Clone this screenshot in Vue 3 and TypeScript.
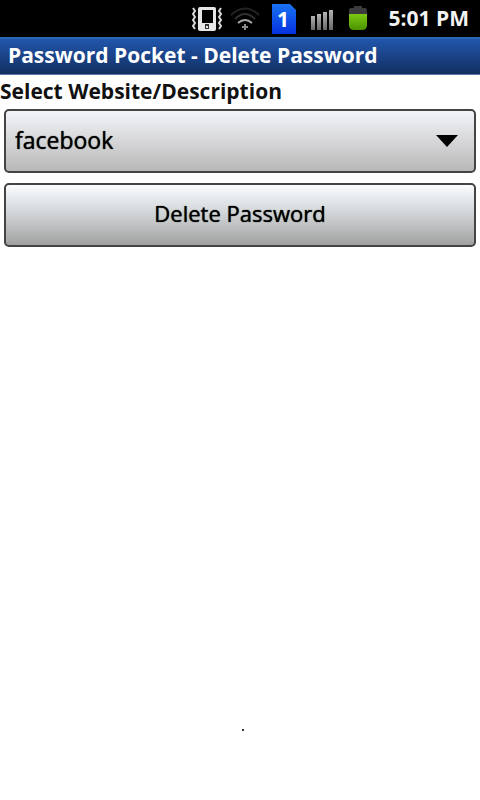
<script setup lang="ts">
import { ref } from 'vue'

const websites = ref<string[]>(['facebook'])
const selected = ref<string>('facebook')

function deletePassword(): void {
  websites.value = websites.value.filter((name) => name !== selected.value)
  selected.value = websites.value[0] ?? ''
}
</script>

<template>
  <div class="screen">
    <div class="status">
      <svg class="vibrate" width="32" height="26" viewBox="0 0 32 26" aria-hidden="true">
        <rect x="7" y="1" width="18" height="24" rx="2" fill="#e6e6e6" />
        <rect x="11" y="4" width="11" height="13" fill="#000" />
        <path d="M14 18h4v5h-4z" fill="#333" />
        <path d="M15 20h2v2h-2z" fill="#e6e6e6" />
        <path
          d="M2 2l2 3-2 3 2 3-2 3 2 3-2 3 2 3M30 2l-2 3 2 3-2 3 2 3-2 3 2 3-2 3"
          fill="none"
          stroke="#d8d8d8"
          stroke-width="2"
        />
      </svg>
      <svg class="wifi" width="30" height="24" viewBox="0 0 30 24" aria-hidden="true">
        <g fill="none" stroke-width="2">
          <path d="M1 8Q15 -5 29 8" stroke="#242424" />
          <path d="M5 12Q15 2 25 12" stroke="#303030" />
          <path d="M8 16Q15 10 22 16" stroke="#a8a8a8" />
          <path d="M15 17v6M12 20h6" stroke="#8c8c8c" />
        </g>
      </svg>
      <svg class="sim" width="24" height="30" viewBox="0 0 24 30" aria-hidden="true">
        <defs>
          <linearGradient id="sim-fill" x1="0" y1="0" x2="0" y2="1">
            <stop offset="0" stop-color="#1a72f2" />
            <stop offset="1" stop-color="#0432e0" />
          </linearGradient>
        </defs>
        <path d="M0 0h18l6 6v24H0z" fill="url(#sim-fill)" />
        <text x="11" y="23" text-anchor="middle" class="sim-number">1</text>
      </svg>
      <svg class="signal" width="24" height="22" viewBox="0 0 24 22" aria-hidden="true">
        <defs>
          <linearGradient id="bar-fill" x1="0" y1="0" x2="0" y2="1">
            <stop offset="0" stop-color="#b4b4b4" />
            <stop offset="1" stop-color="#686868" />
          </linearGradient>
        </defs>
        <g fill="url(#bar-fill)">
          <rect x="0" y="8" width="4" height="14" />
          <rect x="6" y="6" width="4" height="16" />
          <rect x="12" y="4" width="4" height="18" />
          <rect x="18" y="2" width="4" height="20" />
        </g>
      </svg>
      <svg class="battery" width="20" height="26" viewBox="0 0 20 26" aria-hidden="true">
        <defs>
          <linearGradient id="charge" x1="0" y1="0" x2="0" y2="1">
            <stop offset="0" stop-color="#7cc914" />
            <stop offset="1" stop-color="#4b9300" />
          </linearGradient>
        </defs>
        <path d="M6 0h8v2h3q2 0 2 2v4H1V4q0-2 2-2h3z" fill="#3c3c3c" />
        <path d="M1 8h18v11q0 5-5 5H6q-5 0-5-5z" fill="url(#charge)" />
      </svg>
      <time class="clock">5:01 PM</time>
    </div>

    <h1 class="title">Password Pocket - Delete Password</h1>

    <main class="form">
      <label class="label" for="website">Select Website/Description</label>
      <div class="field">
        <select id="website" v-model="selected" class="control select">
          <option v-for="name in websites" :key="name" :value="name">{{ name }}</option>
        </select>
        <svg class="arrow" width="22" height="12" viewBox="0 0 22 12" aria-hidden="true">
          <path d="M0 0h22L11 12z" fill="#000" />
        </svg>
      </div>
      <button type="button" class="control button" @click="deletePassword">Delete Password</button>
    </main>

    <footer class="footer"><span class="dot"></span></footer>
  </div>
</template>

<style>
body {
  background: #fff;
}
</style>

<style scoped>
.screen {
  display: flex;
  flex-direction: column;
  min-height: 100vh;
  box-sizing: border-box;
  background: #fff;
  font-family: "Open Sans", "Noto Sans", sans-serif;
  font-size: 21px;
  color: #111;
}

.status {
  display: flex;
  align-items: center;
  justify-content: flex-end;
  height: 37px;
  padding-right: 11px;
  background: #000;
}

.wifi {
  margin-left: 7px;
}

.sim {
  margin-left: 12px;
}

.sim-number {
  font-size: 21px;
  font-weight: 700;
  fill: #fff;
}

.signal {
  margin-left: 15px;
}

.battery {
  margin-left: 13px;
}

.clock {
  margin-left: 21px;
  padding-bottom: 2px;
  font-weight: 700;
  line-height: 34px;
  color: #f2f2f2;
}

.title {
  height: 38px;
  margin: 0;
  padding-left: 8px;
  box-sizing: border-box;
  border-top: 2px solid #2a66b8;
  border-bottom: 1px solid #5675a8;
  background: linear-gradient(#2156ac, #132f62);
  font-size: 21px;
  font-weight: 700;
  line-height: 32px;
  white-space: nowrap;
  color: #fff;
}

.form {
  display: flex;
  flex-direction: column;
}

.label {
  padding-bottom: 2px;
  font-weight: 700;
  line-height: 32px;
}

.field {
  display: grid;
  align-items: center;
  margin-bottom: 10px;
}

.control {
  height: 64px;
  margin: 0 4px;
  box-sizing: border-box;
  border: 2px solid #444;
  border-radius: 5px;
  font-family: inherit;
  font-weight: 500;
  color: #000;
  text-shadow: 0 0 1px #000;
}

.select {
  grid-area: 1 / 1;
  appearance: none;
  padding: 0 48px 2px 9px;
  background: linear-gradient(#f4f5f9, #b8b8b8);
  font-size: 23px;
}

.arrow {
  grid-area: 1 / 1;
  justify-self: end;
  margin-right: 22px;
  pointer-events: none;
}

.button {
  padding: 0 10px 4px;
  background: linear-gradient(#fafdff, #cfd2d4 50%, #a0a0a0);
  font-size: 22px;
}

.footer {
  display: flex;
  justify-content: center;
  margin-top: auto;
  padding: 0 0 69px 5px;
}

.dot {
  width: 2px;
  height: 2px;
  background: #333;
}
</style>
